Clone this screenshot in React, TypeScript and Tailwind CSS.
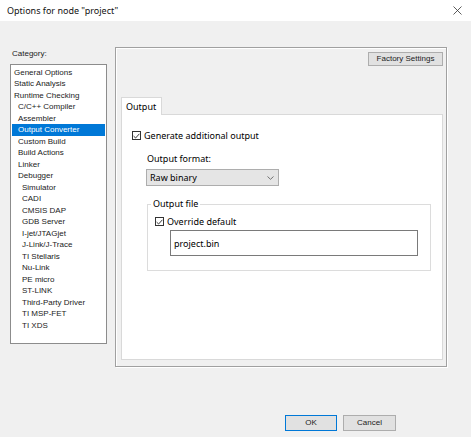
import React from 'react';

const categories: { label: string; level: number }[] = [
  { label: 'General Options', level: 0 },
  { label: 'Static Analysis', level: 0 },
  { label: 'Runtime Checking', level: 0 },
  { label: 'C/C++ Compiler', level: 1 },
  { label: 'Assembler', level: 1 },
  { label: 'Output Converter', level: 1 },
  { label: 'Custom Build', level: 1 },
  { label: 'Build Actions', level: 1 },
  { label: 'Linker', level: 1 },
  { label: 'Debugger', level: 1 },
  { label: 'Simulator', level: 2 },
  { label: 'CADI', level: 2 },
  { label: 'CMSIS DAP', level: 2 },
  { label: 'GDB Server', level: 2 },
  { label: 'I-jet/JTAGjet', level: 2 },
  { label: 'J-Link/J-Trace', level: 2 },
  { label: 'TI Stellaris', level: 2 },
  { label: 'Nu-Link', level: 2 },
  { label: 'PE micro', level: 2 },
  { label: 'ST-LINK', level: 2 },
  { label: 'Third-Party Driver', level: 2 },
  { label: 'TI MSP-FET', level: 2 },
  { label: 'TI XDS', level: 2 },
];

const levelPad = ['pl-[2px]', 'pl-[6px]', 'pl-[10px]'];

function CheckBox() {
  return (
    <span className="w-[9px] h-[9px] border border-[#333] bg-white flex items-center justify-center shrink-0">
      <svg width="7" height="6" viewBox="0 0 7 6">
        <path d="M0.6 3.1 L2.6 5 L6.4 0.8" fill="none" stroke="#222" strokeWidth="0.9" />
      </svg>
    </span>
  );
}

export default function App() {
  const ui = { fontFamily: '"Noto Sans", "Open Sans", sans-serif' };
  const classic = { fontFamily: '"Liberation Sans", Arial, sans-serif' };

  return (
    <div className="w-[474px] h-[439px] bg-white overflow-hidden text-black select-none">
      {/* Title bar */}
      <div className="h-[21px] flex items-center justify-between pl-[7px] pr-[8px]">
        <span className="text-[9px] leading-none text-[#111]" style={ui}>Options for node "project"</span>
        <svg width="9" height="9" viewBox="0 0 9 9" className="mr-[4px]">
          <path d="M0.5 0.5 L8.5 8.5 M8.5 0.5 L0.5 8.5" stroke="#333" strokeWidth="0.8" />
        </svg>
      </div>

      {/* Dialog body */}
      <div className="w-[471px] h-[416px] bg-[#f0f0f0] flex flex-col">
        <div className="flex">
          {/* Category list */}
          <div className="ml-[10px] mt-[28px] w-[97px]">
            <div className="h-[15px] text-[8px] leading-[10px] pl-[2px] text-[#222]" style={classic}>Category:</div>
            <div className="h-[280px] border border-[#8c8c8c] bg-white pt-[1.5px] px-[1px] text-[#222]" style={classic}>
              {categories.map((c) => {
                const selected = c.label === 'Output Converter';
                return (
                  <div
                    key={c.label}
                    className={`h-[11.5px] leading-[11.5px] text-[8px] whitespace-nowrap ${levelPad[c.level]} ${
                      selected ? 'bg-[#0078d7] text-white' : ''
                    }`}
                  >
                    {c.label}
                  </div>
                );
              })}
            </div>
          </div>

          {/* Options frame */}
          <div className="ml-[8px] mt-[26px] w-[332px] h-[320px] border border-[#a0a0a0] shadow-[inset_1px_1px_0_#ffffff,1px_1px_0_#ffffff] flex flex-col">
            <button
              className="self-end mr-[3px] mt-[4px] w-[75px] h-[14px] bg-[#e1e1e1] border border-[#adadad] text-[8px] leading-none text-[#222]"
              style={classic}
            >
              Factory Settings
            </button>

            {/* Tab header */}
            <div className="ml-[5px] mt-[31px] flex relative z-10">
              <div className="w-[41px] h-[18px] bg-white border border-b-0 border-[#d9d9d9] flex items-center pl-[4px] text-[9px] leading-none" style={ui}>
                Output
              </div>
            </div>

            {/* Tab page */}
            <div className="ml-[5px] -mt-px w-[322px] h-[246px] bg-white border border-[#d9d9d9] flex flex-col" style={ui}>
              <div className="flex items-center gap-[3px] ml-[10px] mt-[16px] text-[9px] leading-none">
                <CheckBox />
                <span>Generate additional output</span>
              </div>

              <div className="ml-[25px] mt-[14px] text-[9px] leading-none">Output format:</div>
              <div className="ml-[24px] mt-[6px] w-[133px] h-[17px] bg-[#e5e5e5] border border-[#adadad] flex items-center justify-between pl-[3px] pr-[4px] text-[9px] leading-none">
                <span>Raw binary</span>
                <svg width="7" height="4" viewBox="0 0 7 4">
                  <path d="M0.5 0.5 L3.5 3.3 L6.5 0.5" fill="none" stroke="#555" strokeWidth="0.8" />
                </svg>
              </div>

              {/* Output file group */}
              <div className="ml-[25px] mt-[18px] w-[284px] h-[67px] border border-[#dcdcdc] relative flex flex-col">
                <span className="absolute -top-[6px] left-[3px] px-[2px] bg-white text-[9px] leading-none">Output file</span>
                <div className="flex items-center gap-[3px] ml-[7px] mt-[12px] text-[9px] leading-none">
                  <CheckBox />
                  <span>Override default</span>
                </div>
                <div className="ml-[22px] mt-[4px] w-[248px] h-[26px] border border-[#7a7a7a] bg-white flex items-center pl-[3px] text-[9px] leading-none">
                  project.bin
                </div>
              </div>
            </div>
          </div>
        </div>

        {/* Dialog buttons */}
        <div className="flex justify-end gap-[6px] pr-[75px] mt-[48px] text-[#222]" style={classic}>
          <button className="w-[52px] h-[16px] bg-[#e1e1e1] border border-[#0078d7] text-[8px] leading-none">OK</button>
          <button className="w-[53px] h-[16px] bg-[#e1e1e1] border border-[#adadad] text-[8px] leading-none">Cancel</button>
        </div>
      </div>
    </div>
  );
}
